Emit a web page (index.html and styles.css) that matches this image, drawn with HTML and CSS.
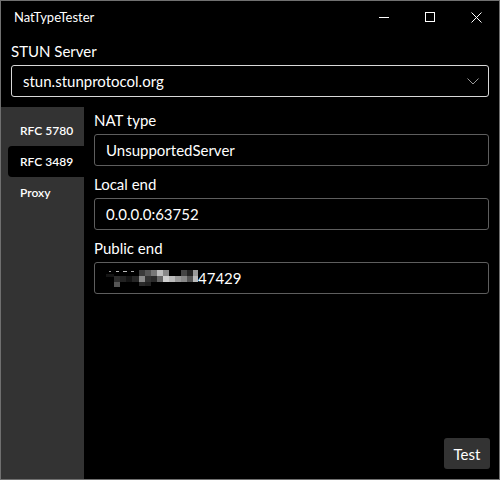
FILE: index.html
```html
<!DOCTYPE html>
<html>
<head>
<meta charset="utf-8">
<title>NatTypeTester</title>
<link rel="stylesheet" href="styles.css">
</head>
<body>
<div class="window">
  <div class="titlebar">
    <div class="title">NatTypeTester</div>
    <div class="caption-buttons">
      <div class="cbtn"><svg width="10" height="10" viewBox="0 0 10 10"><line x1="0" y1="5.5" x2="10" y2="5.5" stroke="#fff" stroke-width="1"/></svg></div>
      <div class="cbtn"><svg width="10" height="10" viewBox="0 0 10 10"><rect x="0.5" y="0.5" width="9" height="9" fill="none" stroke="#fff" stroke-width="1"/></svg></div>
      <div class="cbtn"><svg width="11" height="11" viewBox="0 0 11 11"><path d="M0.5 0.5 L10.5 10.5 M10.5 0.5 L0.5 10.5" stroke="#fff" stroke-width="1"/></svg></div>
    </div>
  </div>
  <div class="server">
    <div class="label">STUN Server</div>
    <div class="combo">
      <span>stun.stunprotocol.org</span>
      <svg class="chev" width="12" height="7" viewBox="0 0 12 7"><path d="M0.5 0.5 L6 6 L11.5 0.5" fill="none" stroke="#9a9a9a" stroke-width="1"/></svg>
    </div>
  </div>
  <div class="main">
    <div class="nav">
      <div class="nav-item">RFC 5780</div>
      <div class="nav-item selected">RFC 3489</div>
      <div class="nav-item">Proxy</div>
    </div>
    <div class="content">
      <div class="label">NAT type</div>
      <div class="textbox">UnsupportedServer</div>
      <div class="label">Local end</div>
      <div class="textbox">0.0.0.0:63752</div>
      <div class="label">Public end</div>
      <div class="textbox">
        <svg class="pix" width="95" height="30" viewBox="0 0 95 30">
          <rect x="6" y="8" width="2" height="1" fill="#999"/>
          <rect x="13" y="8" width="3" height="1" fill="#bbb"/>
          <rect x="20" y="8" width="4" height="1" fill="#bbb"/>
          <rect x="28" y="8" width="3" height="1" fill="#aaa"/>
          <rect x="3" y="11" width="8" height="3" fill="#141414"/>
          <rect x="11" y="13" width="6" height="6" fill="#2c2c2c"/>
          <rect x="11" y="19" width="6" height="5" fill="#555"/>
          <rect x="17" y="13" width="6" height="6" fill="#222"/>
          <rect x="23" y="13" width="6" height="6" fill="#141414"/>
          <rect x="29" y="13" width="7" height="6" fill="#262626"/>
          <rect x="36" y="7" width="6" height="6" fill="#3a3a3a"/>
          <rect x="36" y="13" width="6" height="6" fill="#8a8a8a"/>
          <rect x="36" y="19" width="6" height="4" fill="#2a2a2a"/>
          <rect x="42" y="7" width="6" height="6" fill="#555"/>
          <rect x="42" y="13" width="6" height="6" fill="#333"/>
          <rect x="42" y="19" width="6" height="4" fill="#222"/>
          <rect x="48" y="7" width="6" height="6" fill="#777"/>
          <rect x="48" y="13" width="6" height="6" fill="#2a2a2a"/>
          <rect x="54" y="7" width="6" height="6" fill="#bdbdbd"/>
          <rect x="54" y="13" width="6" height="6" fill="#666"/>
          <rect x="60" y="7" width="6" height="6" fill="#888"/>
          <rect x="60" y="13" width="6" height="6" fill="#d0d0d0"/>
          <rect x="66" y="13" width="6" height="6" fill="#bbb"/>
          <rect x="72" y="13" width="6" height="6" fill="#999"/>
          <rect x="78" y="7" width="6" height="6" fill="#444"/>
          <rect x="78" y="13" width="6" height="6" fill="#888"/>
          <rect x="84" y="7" width="6" height="6" fill="#222"/>
          <rect x="84" y="13" width="6" height="6" fill="#555"/>
          <rect x="90" y="7" width="5" height="6" fill="#999"/>
          <rect x="90" y="13" width="5" height="6" fill="#bbb"/>
        </svg><span>47429</span>
      </div>
      <div class="actions">
        <div class="button">Test</div>
      </div>
    </div>
  </div>
</div>
</body>
</html>
```

FILE: styles.css
```css
* { box-sizing: border-box; }
html, body {
  margin: 0;
  padding: 0;
  background: #000;
}
body {
  font-family: Lato, "Liberation Sans", sans-serif;
  color: #fff;
}
.window {
  width: 500px;
  height: 480px;
  border: 1px solid #707070;
  background: #000;
  display: flex;
  flex-direction: column;
  overflow: hidden;
}
.titlebar {
  height: 32px;
  display: flex;
  align-items: center;
  flex: none;
}
.title {
  font-size: 13px;
  padding-left: 13px;
  flex: 1;
}
.caption-buttons {
  display: flex;
  height: 32px;
}
.cbtn {
  width: 46px;
  height: 32px;
  display: flex;
  align-items: center;
  justify-content: center;
}
.label {
  font-size: 15px;
  line-height: 20px;
  margin-bottom: 4px;
}
.server {
  padding: 8px 10px 0 10px;
  flex: none;
}
.combo {
  height: 32px;
  border: 1px solid #d8d8d8;
  border-radius: 3px;
  display: flex;
  align-items: center;
  padding: 0 9px 0 11px;
  font-size: 15px;
}
.combo span { flex: 1; }
.chev { margin-top: 1px; }
.main {
  flex: 1;
  display: flex;
  margin-top: 10px;
}
.nav {
  width: 83px;
  background: #333;
  padding-top: 8px;
  padding-left: 7px;
  flex: none;
}
.nav-item {
  height: 31px;
  line-height: 31px;
  padding-left: 12px;
  font-size: 12px;
  font-weight: 600;
  border-radius: 4px 0 0 4px;
}
.nav-item.selected {
  background: #000;
}
.content {
  flex: 1;
  padding: 3px 10px 10px 10px;
  display: flex;
  flex-direction: column;
}
.content .textbox + .label { margin-top: 8px; }
.textbox {
  height: 32px;
  border: 1px solid #5e5e5e;
  border-radius: 3px;
  display: flex;
  align-items: center;
  padding: 0 11px;
  font-size: 15px;
}
.pix { flex: none; margin-left: -3px; }
.actions {
  margin-top: auto;
  display: flex;
  justify-content: flex-end;
}
.button {
  width: 46px;
  height: 31px;
  background: #333;
  border-radius: 3px;
  font-size: 15px;
  display: flex;
  align-items: center;
  justify-content: center;
  margin-right: -1px;
}
```
